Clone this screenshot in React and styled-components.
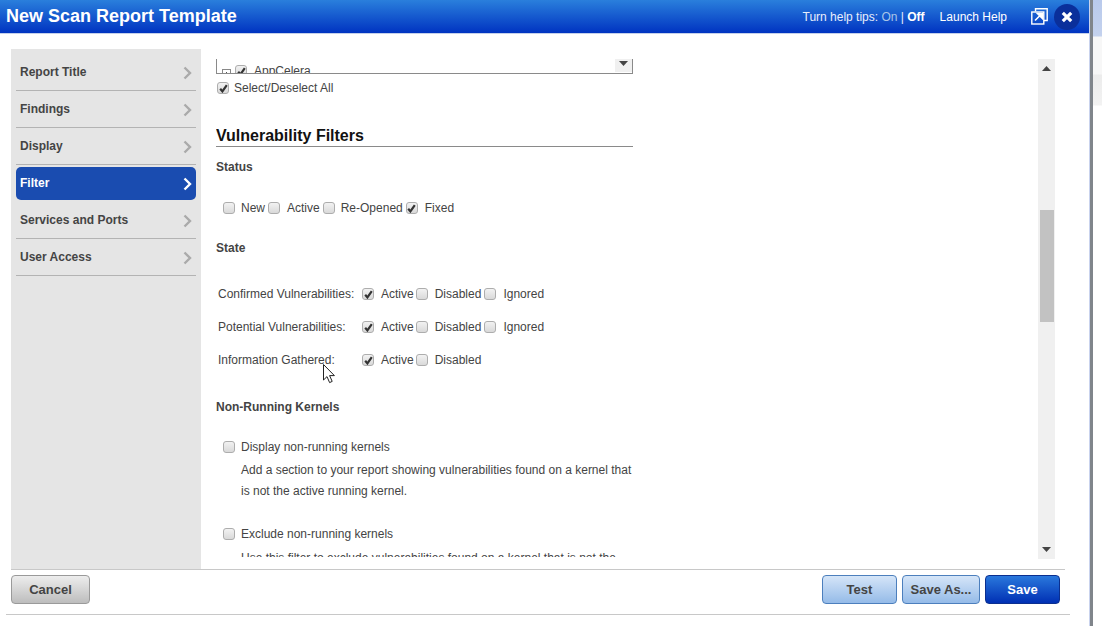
import React from "react";
import styled, { createGlobalStyle } from "styled-components";

const GlobalStyle = createGlobalStyle`
  html, body {
    margin: 0;
    padding: 0;
    background: #fff;
    font-family: "Liberation Sans", Arial, sans-serif;
  }
`;

const Page = styled.div`
  width: 1102px;
  height: 626px;
  display: flex;
  overflow: hidden;
  position: relative;
`;

const Modal = styled.div`
  width: 1089px;
  height: 626px;
  display: flex;
  flex-direction: column;
  flex-shrink: 0;
`;

const Edge = styled.div`
  width: 3px;
  flex-shrink: 0;
  background: #80858b;
  border-left: 1px solid #c9d3ee;
  box-sizing: content-box;
`;

const Outside = styled.div`
  flex: 1;
  background: linear-gradient(
    #b9caec 0,
    #c4d2ee 36px,
    #f7f7f7 37px,
    #f7f7f7 74px,
    #ececec 75px,
    #f2f2f2 105px,
    #fff 106px
  );
`;

const Header = styled.div`
  height: 33px;
  flex-shrink: 0;
  display: flex;
  align-items: center;
  padding: 0 9px 0 6px;
  background: linear-gradient(#2a7fdc, #0033c1);
  border-bottom: 1px solid #c4d0ea;
  color: #fff;
`;

const Title = styled.h1`
  margin: 0 auto 0 0;
  font-size: 18px;
  font-weight: bold;
  line-height: 33px;
`;

const Tips = styled.span`
  font-size: 12px;
  color: #e8eefb;
`;

const TipOn = styled.span`
  color: #a9c5e8;
`;

const TipOff = styled.b`
  color: #fff;
`;

const HelpLink = styled.span`
  font-size: 12px;
  color: #fff;
  margin-left: 15px;
  margin-right: 24px;
`;

const PopOut = styled.svg`
  width: 17px;
  height: 17px;
  margin-right: 6px;
`;

const CloseButton = styled.div`
  width: 26px;
  height: 26px;
  border-radius: 50%;
  background: #0a2f9b;
  display: flex;
  align-items: center;
  justify-content: center;
`;

const Body = styled.div`
  flex: 1;
  min-height: 0;
  display: flex;
  margin: 15px 24px 0 11px;
  border-bottom: 1px solid #c8c8c8;
`;

const Sidebar = styled.nav`
  width: 180px;
  flex-shrink: 0;
  background: #e5e5e5;
  padding: 5px 5px 0;
`;

const NavItem = styled.div`
  height: 37px;
  box-sizing: border-box;
  display: flex;
  align-items: center;
  justify-content: space-between;
  padding: 0 4px 0 4px;
  border-bottom: 1px solid #b3b3b3;
  font-size: 12px;
  font-weight: bold;
  color: ${(p) => (p.$active ? "#fff" : "#444")};
  ${(p) =>
    p.$active &&
    `
    background: #1a4cb0;
    border-radius: 5px;
    border-bottom: none;
    height: 33px;
    margin: 2px 0;
    padding-bottom: 2px;
  `}
`;

const NavArrow = styled.svg`
  margin-top: 2px;
`;

const Content = styled.div`
  flex: 1;
  min-width: 0;
  display: flex;
  padding: 10px 10px 10px 15px;
`;

const ScrollPane = styled.div`
  flex: 1;
  min-width: 0;
  overflow: hidden;
  margin-bottom: 2px;
  color: #444;
  font-size: 12px;
`;

const Column = styled.div`
  width: 417px;
`;

const TreeBox = styled.div`
  height: 14px;
  box-sizing: content-box;
  border: 1px solid #8a8a8a;
  border-top: none;
  overflow: hidden;
  display: flex;
  position: relative;
  padding-left: 5px;
  font-size: 12px;
`;

const TreeRow = styled.div`
  display: flex;
  align-items: center;
  gap: 1px;
  height: 14px;
  padding-top: 5px;
  white-space: nowrap;
`;

const Expander = styled.span`
  width: 7px;
  height: 7px;
  border: 1px solid #888;
  margin: 5px 3px 0 0;
  display: block;
  background: linear-gradient(#555, #555) center 2px / 1px 3px no-repeat;
`;

const TreeLabel = styled.span`
  margin-left: 6px;
`;

const TreeArrow = styled.div`
  position: absolute;
  top: 0;
  right: 0;
  width: 17px;
  height: 13px;
  background: #f0f0f0;
  display: flex;
  justify-content: center;
  padding-top: 2px;
  box-sizing: border-box;
`;

const SelectAll = styled.label`
  display: flex;
  align-items: center;
  height: 14px;
  margin: 7px 0 0 1px;
`;

const SectionTitle = styled.h2`
  margin: 32px 0 0;
  height: 19px;
  font-size: 16px;
  line-height: 18px;
  color: #111;
  border-bottom: 1px solid #8a8a8a;
`;

const SubTitle = styled.h3`
  margin: ${(p) => p.$top}px 0 0 ${(p) => p.$left || 0}px;
  font-size: 12px;
  line-height: 14px;
  font-weight: bold;
  color: #444;
`;

const CheckRow = styled.div`
  display: flex;
  align-items: center;
  height: 14px;
  margin: ${(p) => p.$top}px 0 0 ${(p) => p.$left || 0}px;
`;

const Box = styled.span`
  width: 12px;
  height: 12px;
  box-sizing: border-box;
  flex-shrink: 0;
  border: 1px solid #adadad;
  border-radius: 3px;
  background: linear-gradient(#f2f2f2, #d9d9d9);
  display: flex;
  align-items: center;
  justify-content: center;
  margin-left: ${(p) => p.$left || 0}px;
`;

const CheckLabel = styled.span`
  margin-left: ${(p) => p.$gap || 6}px;
  white-space: nowrap;
`;

const RowLabel = styled.span`
  width: 144px;
  padding-left: 2px;
  box-sizing: border-box;
  flex-shrink: 0;
`;

const Description = styled.p`
  margin: ${(p) => p.$top}px 0 0 25px;
  font-size: 12px;
  line-height: 21px;
  white-space: nowrap;
`;

const Scrollbar = styled.div`
  width: 17px;
  flex-shrink: 0;
  background: #f0f0f0;
  display: flex;
  flex-direction: column;
  justify-content: space-between;
  align-items: center;
  padding: 7px 0;
  box-sizing: border-box;
  position: relative;
`;

const Thumb = styled.div`
  position: absolute;
  top: 151px;
  left: 2px;
  right: 1px;
  height: 112px;
  background: #c2c2c2;
`;

const Footer = styled.div`
  height: 45px;
  flex-shrink: 0;
  margin: 0 19px 0 6px;
  padding: 5px 10px 0 5px;
  box-sizing: border-box;
  display: flex;
  gap: 5px;
  border-bottom: 1px solid #c8c8c8;
`;

const Button = styled.button`
  height: 29px;
  width: ${(p) => p.$width}px;
  margin-left: ${(p) => (p.$auto ? "auto" : "0")};
  padding: 0;
  font-family: inherit;
  font-size: 13px;
  font-weight: bold;
  border-radius: 4px;
  color: ${(p) => (p.$kind === "primary" ? "#fff" : "#444")};
  border: 1px solid
    ${(p) =>
      p.$kind === "primary" ? "#0b2f8f" : p.$kind === "light" ? "#4c7fbd" : "#9a9a9a"};
  background: ${(p) =>
    p.$kind === "primary"
      ? "linear-gradient(#2a78dc, #0030b4)"
      : p.$kind === "light"
      ? "linear-gradient(#d5e5f8, #95bbe8)"
      : "linear-gradient(#ededed, #bdbdbd)"};
`;

const Bottom = styled.div`
  height: 11px;
  flex-shrink: 0;
`;

const Cursor = styled.svg`
  position: absolute;
  left: 323px;
  top: 364px;
  width: 13px;
  height: 20px;
`;

const Chevron = ({ active }) => (
  <NavArrow width="9" height="14" viewBox="0 0 9 14">
    <path d="M1.5 1.5 L7 7 L1.5 12.5" fill="none" stroke={active ? "#fff" : "#aaa"} strokeWidth="2.4" />
  </NavArrow>
);

const Check = ({ on, left }) => (
  <Box $left={left}>
    {on && (
      <svg width="9" height="9" viewBox="0 0 9 9">
        <path d="M1.2 4.8 L3.4 7.4 L7.8 1.2" fill="none" stroke="#333" strokeWidth="2.2" />
      </svg>
    )}
  </Box>
);

const Arrow = ({ up }) => (
  <svg width="9" height="5" viewBox="0 0 9 5">
    <path d={up ? "M4.5 0 L9 5 L0 5 Z" : "M0 0 L9 0 L4.5 5 Z"} fill="#444" />
  </svg>
);

const navItems = ["Report Title", "Findings", "Display", "Filter", "Services and Ports", "User Access"];

const stateRows = [
  { label: "Confirmed Vulnerabilities:", ignored: true },
  { label: "Potential Vulnerabilities:", ignored: true },
  { label: "Information Gathered:", ignored: false },
];

export default function App() {
  return (
    <Page>
      <GlobalStyle />
      <Modal>
        <Header>
          <Title>New Scan Report Template</Title>
          <Tips>
            Turn help tips: <TipOn>On</TipOn> | <TipOff>Off</TipOff>
          </Tips>
          <HelpLink>Launch Help</HelpLink>
          <PopOut viewBox="0 0 17 17">
            <path d="M4.5 3.5 V0.8 H16.2 V12.5 H13" fill="none" stroke="#fff" strokeWidth="1.4" />
            <rect x="0.8" y="4" width="12" height="12" fill="none" stroke="#fff" strokeWidth="1.4" />
            <path d="M4 12.5 L10 6.5 M6.5 5.5 H11.5 V10.5 Z" fill="#fff" stroke="#fff" strokeWidth="1.6" />
          </PopOut>
          <CloseButton>
            <svg width="12" height="12" viewBox="0 0 12 12">
              <path d="M1.8 1.8 L10.2 10.2 M10.2 1.8 L1.8 10.2" stroke="#fff" strokeWidth="3.2" />
            </svg>
          </CloseButton>
        </Header>
        <Body>
          <Sidebar>
            {navItems.map((item) => (
              <NavItem key={item} $active={item === "Filter"}>
                {item}
                <Chevron active={item === "Filter"} />
              </NavItem>
            ))}
          </Sidebar>
          <Content>
            <ScrollPane>
              <Column>
                <TreeBox>
                  <TreeRow>
                    <Expander />
                    <Check on />
                    <TreeLabel>AppCelera</TreeLabel>
                  </TreeRow>
                  <TreeArrow>
                    <Arrow />
                  </TreeArrow>
                </TreeBox>
                <SelectAll>
                  <Check on />
                  <CheckLabel $gap={5}>Select/Deselect All</CheckLabel>
                </SelectAll>
                <SectionTitle>Vulnerability Filters</SectionTitle>
                <SubTitle $top={13}>Status</SubTitle>
                <CheckRow $top={27} $left={7}>
                  <Check />
                  <CheckLabel>New</CheckLabel>
                  <Check left={3} />
                  <CheckLabel $gap={7}>Active</CheckLabel>
                  <Check left={3} />
                  <CheckLabel>Re-Opened</CheckLabel>
                  <Check on left={3} />
                  <CheckLabel $gap={7}>Fixed</CheckLabel>
                </CheckRow>
                <SubTitle $top={26}>State</SubTitle>
                {stateRows.map((row, i) => (
                  <CheckRow key={row.label} $top={i === 0 ? 32 : 19}>
                    <RowLabel>{row.label}</RowLabel>
                    <Check on left={2} />
                    <CheckLabel $gap={7}>Active</CheckLabel>
                    <Check left={2} />
                    <CheckLabel $gap={7}>Disabled</CheckLabel>
                    {row.ignored && (
                      <>
                        <Check left={3} />
                        <CheckLabel $gap={7}>Ignored</CheckLabel>
                      </>
                    )}
                  </CheckRow>
                ))}
                <SubTitle $top={33}>Non-Running Kernels</SubTitle>
                <CheckRow $top={26} $left={7}>
                  <Check />
                  <CheckLabel>Display non-running kernels</CheckLabel>
                </CheckRow>
                <Description $top={6}>
                  Add a section to your report showing vulnerabilities found on a kernel that
                  <br />
                  is not the active running kernel.
                </Description>
                <CheckRow $top={25} $left={7}>
                  <Check />
                  <CheckLabel>Exclude non-running kernels</CheckLabel>
                </CheckRow>
                <Description $top={7}>
                  Use this filter to exclude vulnerabilities found on a kernel that is not the
                </Description>
              </Column>
            </ScrollPane>
            <Scrollbar>
              <Arrow up />
              <Thumb />
              <Arrow />
            </Scrollbar>
          </Content>
        </Body>
        <Footer>
          <Button $width={79}>Cancel</Button>
          <Button $width={75} $auto $kind="light">Test</Button>
          <Button $width={78} $kind="light">Save As...</Button>
          <Button $width={75} $kind="primary">Save</Button>
        </Footer>
        <Bottom />
      </Modal>
      <Edge />
      <Outside />
      <Cursor viewBox="0 0 13 20">
        <path d="M0.5 0.5 V16 L4 12.6 L6.6 18.6 L9.2 17.4 L6.6 11.6 H11.4 Z" fill="#fff" stroke="#222" strokeWidth="1" />
      </Cursor>
    </Page>
  );
}
